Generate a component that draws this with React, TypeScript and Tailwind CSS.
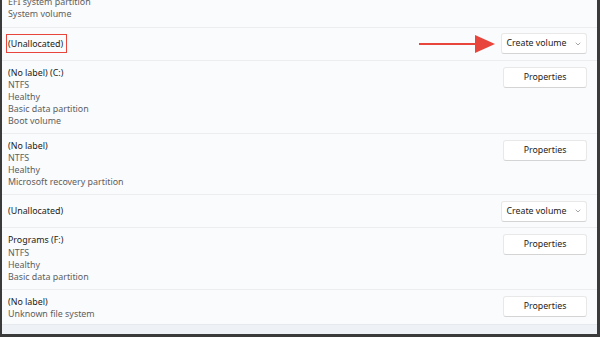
import { ChevronDown } from "lucide-react";

type Row = {
  lines: string[];
  action: "props" | "create";
  single?: boolean;
  marked?: boolean;
};

const ROWS: Row[] = [
  { lines: ["(Unallocated)"], action: "create", single: true, marked: true },
  { lines: ["(No label) (C:)", "NTFS", "Healthy", "Basic data partition", "Boot volume"], action: "props" },
  { lines: ["(No label)", "NTFS", "Healthy", "Microsoft recovery partition"], action: "props" },
  { lines: ["(Unallocated)"], action: "create", single: true },
  { lines: ["Programs (F:)", "NTFS", "Healthy", "Basic data partition"], action: "props" },
  { lines: ["(No label)", "Unknown file system"], action: "props" },
];

function ActionButton({ kind }: { kind: "props" | "create" }) {
  if (kind === "create") {
    return (
      <button className="flex items-center justify-center gap-[7px] w-[86px] h-[21px] bg-white border border-[#e8e8e8] border-b-[#d4d4d4] rounded-[3px] text-[8.8px] text-[#1b1b1b]">
        Create volume
        <ChevronDown className="w-[8px] h-[8px] text-[#555]" strokeWidth={1.6} />
      </button>
    );
  }
  return (
    <button className="flex items-center justify-center w-[84px] h-[21px] bg-white border border-[#e8e8e8] border-b-[#d4d4d4] rounded-[3px] text-[8.8px] text-[#1b1b1b]">
      Properties
    </button>
  );
}

function PartitionRow({ row, last }: { row: Row; last?: boolean }) {
  return (
    <div
      className={`relative flex justify-between border-t border-[#ebedf0] pl-[6px] pr-[10px] ${
        row.single ? "items-center h-[33px]" : last ? "items-start pt-[6px] pb-[4px]" : "items-start py-[6px]"
      }`}
    >
      <div className="flex flex-col leading-[12.1px]">
        {row.lines.map((line, i) =>
          i === 0 ? (
            row.marked ? (
              <span
                key={i}
                className="-ml-[2px] self-start border-[1.5px] border-[#e8463c] pl-[1px] pr-[3px] py-[2.5px] text-[#1b1b1b]"
              >
                {line}
              </span>
            ) : (
              <span key={i} className="text-[#1b1b1b]">
                {line}
              </span>
            )
          ) : (
            <span key={i} className="text-[#5e5e5e]">
              {line}
            </span>
          )
        )}
      </div>
      {row.marked && (
        <svg
          className="absolute left-[415px] top-[6px]"
          width="80"
          height="20"
          viewBox="0 0 80 20"
        >
          <line x1="2" y1="10" x2="62" y2="10" stroke="#e8463c" strokeWidth="2.2" />
          <polygon points="58,1 78,10 58,19" fill="#e8463c" />
        </svg>
      )}
      <ActionButton kind={row.action} />
    </div>
  );
}

export default function App() {
  return (
    <div
      className="w-[600px] h-[337px] bg-[#3a3a3a] pl-[2px] pr-[3px] pb-[3px] overflow-hidden"
      style={{ fontFamily: '"Noto Sans", "Open Sans", sans-serif' }}
    >
      <div className="h-full bg-[#fafbfc] flex flex-col overflow-hidden text-[8.9px]">
        <div className="-mt-[4px] pl-[6px] pb-[6px] flex flex-col leading-[12.3px] text-[#5e5e5e]">
          <span>EFI system partition</span>
          <span>System volume</span>
        </div>
        {ROWS.map((row, i) => (
          <PartitionRow key={i} row={row} last={i === ROWS.length - 1} />
        ))}
        <div className="flex-1 border-t border-[#e6e9ee] bg-[#eef1f5]" />
      </div>
    </div>
  );
}
